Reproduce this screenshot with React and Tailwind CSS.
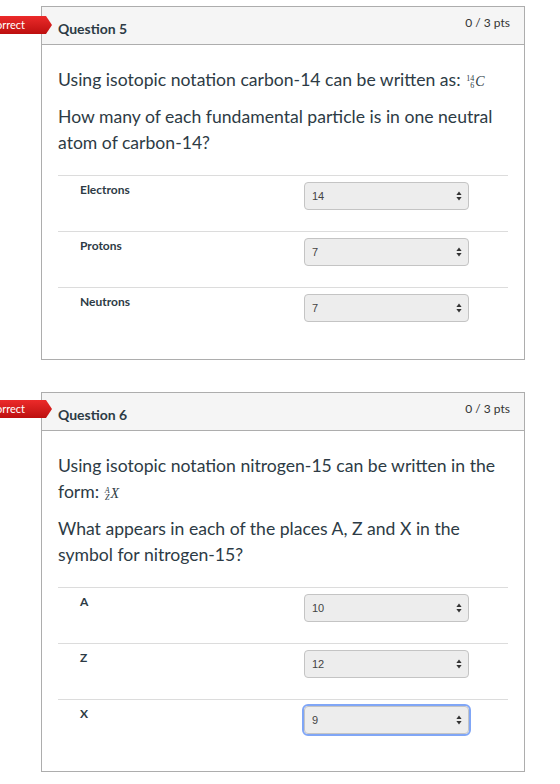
import React from 'react'

const lato = { fontFamily: 'Lato, "Open Sans", sans-serif' }

const Arrows = () => (
  <svg width="6" height="10" viewBox="0 0 6 10" className="shrink-0">
    <path d="M3 0.5 L5.6 4 L0.4 4 Z" fill="#333" />
    <path d="M3 9.5 L5.6 6 L0.4 6 Z" fill="#333" />
  </svg>
)

const Select = ({ value, focused }) => (
  <div
    className={
      'w-[165px] h-[28px] rounded-[4px] border border-[#c4c4c4] bg-[#ededed] flex items-center justify-between pl-[7px] pr-[6px] ' +
      (focused ? 'outline-2 outline-[#80a6f6]' : '')
    }
  >
    <span className="text-[11px] text-[#444]" style={{ fontFamily: '"Liberation Sans", Arial, sans-serif' }}>
      {value}
    </span>
    <Arrows />
  </div>
)

const Row = ({ label, value, focused }) => (
  <div className="border-t border-[#dcdcdc] flex pt-[6px] pb-[21px]">
    <div className="w-[246px] shrink-0 pl-[22px] text-[12px] font-bold text-[#2d3b45] leading-[16px]">
      {label}
    </div>
    <Select value={value} focused={focused} />
  </div>
)

const Iso = ({ top, bottom, sym }) => (
  <span className="inline-flex items-center align-middle ml-[1px]">
    <span className="inline-flex flex-col items-end leading-[7px] text-[8px]" style={{ fontFamily: '"Liberation Serif", serif' }}>
      <span className={/[A-Z]/.test(top) ? 'italic' : ''}>{top}</span>
      <span className={/[A-Z]/.test(bottom) ? 'italic' : ''}>{bottom}</span>
    </span>
    <span className="italic text-[14px] leading-none ml-[1px]" style={{ fontFamily: '"Liberation Serif", serif' }}>
      {sym}
    </span>
  </span>
)

const Banner = ({ top }) => (
  <div
    className={
      'absolute left-[-26px] w-[78px] h-[18px] bg-gradient-to-b from-[#ec2a2a] to-[#bd0e0e] text-white text-[11px] leading-[18px] text-right pr-[27px] [clip-path:polygon(0_0,calc(100%-6px)_0,100%_50%,calc(100%-6px)_100%,0_100%)] ' +
      top
    }
  >
    Incorrect
  </div>
)

const Question = ({ num, bannerTop, paragraphs, rows, className }) => (
  <div className={'relative pl-[41px] pr-[35px] ' + className}>
    <Banner top={bannerTop} />
    <div className="border border-[#adadad] bg-white">
      <div className="bg-[#f5f5f5] border-b border-[#adadad] h-[38px] flex justify-between pl-[16px] pr-[14px]">
        <div className="pt-[12px] text-[14px] font-bold text-[#2d3b45] leading-[20px]">Question {num}</div>
        <div className="pt-[8px] text-[12px] text-[#333] leading-[16px]">0 / 3 pts</div>
      </div>
      <div className="pt-[22px] pb-[16px] px-[16px]">
        <div className="text-[17.6px] leading-[26px] text-[#2d3b45] flex flex-col gap-[11px]">
          {paragraphs.map((p, i) => (
            <p key={i}>{p}</p>
          ))}
        </div>
        <div className="mt-[19px]">
          {rows.map(r => (
            <Row key={r.label} {...r} />
          ))}
        </div>
      </div>
    </div>
  </div>
)

export default function App() {
  return (
    <div className="bg-white w-[560px] min-h-[784px] pt-[6px]" style={lato}>
      <Question
        num={5}
        bannerTop="top-[10px]"
        paragraphs={[
          <>
            Using isotopic notation carbon-14 can be written as: <Iso top="14" bottom="6" sym="C" />
          </>,
          'How many of each fundamental particle is in one neutral atom of carbon-14?',
        ]}
        rows={[
          { label: 'Electrons', value: '14' },
          { label: 'Protons', value: '7' },
          { label: 'Neutrons', value: '7' },
        ]}
      />
      <Question
        num={6}
        className="mt-[32px]"
        bannerTop="top-[8px]"
        paragraphs={[
          <>
            Using isotopic notation nitrogen-15 can be written in the form: <Iso top="A" bottom="Z" sym="X" />
          </>,
          'What appears in each of the places A, Z and X in the symbol for nitrogen-15?',
        ]}
        rows={[
          { label: 'A', value: '10' },
          { label: 'Z', value: '12' },
          { label: 'X', value: '9', focused: true },
        ]}
      />
    </div>
  )
}
